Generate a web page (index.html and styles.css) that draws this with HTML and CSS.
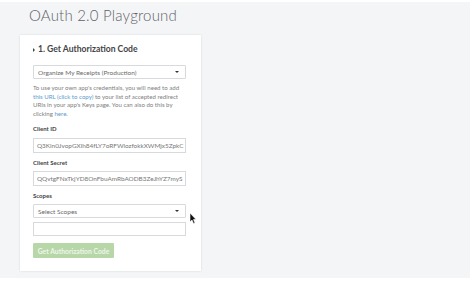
FILE: index.html
```html
<!DOCTYPE html>
<html>
<head>
<meta charset="utf-8">
<link rel="stylesheet" href="styles.css">
</head>
<body>
<div class="frame">
  <h1 class="title">OAuth 2.0 Playground</h1>
  <div class="card">
    <div class="step"><span class="caret"></span>1. Get Authorization Code</div>
    <div class="select"><span>Organize My Receipts (Production)</span><span class="arrow"></span></div>
    <p class="help">To use your own app's credentials, you will need to add<br><a>this URL (click to copy)</a> to your list of accepted redirect<br>URIs in your app's Keys page. You can also do this by<br>clicking <a>here</a>.</p>
    <div class="label first">Client ID</div>
    <div class="input">Q3Kln0JvopGXlh84fLY7oRFWlozfokkXWMjx5ZpkC</div>
    <div class="label">Client Secret</div>
    <div class="input">QQvtgFNxTkjYD8OnFbuAmRbAODB3ZeJhYZ7myS</div>
    <div class="label">Scopes</div>
    <div class="select scopes"><span>Select Scopes</span><span class="arrow"></span></div>
    <div class="input empty"></div>
    <div class="btn">Get Authorization Code</div>
    <svg class="cursor" width="8" height="11" viewBox="0 0 8 11"><path d="M1 0 L1 9 L3 7 L4.5 10.5 L6 10 L4.5 6.5 L7 6.5 Z" fill="#111" stroke="#fff" stroke-width="0.6"/></svg>
  </div>
</div>
</body>
</html>
```
FILE: styles.css
```css
html, body { margin: 0; padding: 0; background: #fff; }
body { width: 474px; height: 281px; overflow: hidden; font-family: "Lato", "Open Sans", sans-serif; }
.frame {
  width: 470px;
  height: 276px;
  margin-top: 2px;
  background: #f4f5f7;
  padding: 3px 0 0 20px;
  box-sizing: border-box;
}
.title {
  margin: 0 0 0 9px;
  font-weight: 300;
  font-size: 15px;
  line-height: 20px;
  color: #5f6368;
  letter-spacing: 0.2px;
}
.card {
  position: relative;
  margin-top: 10px;
  width: 181px;
  height: 236px;
  background: #fff;
  box-shadow: 0 0 2px rgba(0,0,0,0.12);
  box-sizing: border-box;
  padding: 9px 15px 0 13px;
}
.step {
  font-size: 8.6px;
  font-weight: 700;
  color: #444;
  height: 11px;
  line-height: 11px;
  display: flex;
  align-items: center;
}
.caret {
  width: 0; height: 0;
  border-left: 2.5px solid #444;
  border-top: 2px solid transparent;
  border-bottom: 2px solid transparent;
  margin-right: 3px;
}
.select {
  margin-top: 10px;
  height: 14px;
  border: 1px solid #d7d9dc;
  border-radius: 1px;
  box-sizing: border-box;
  display: flex;
  align-items: center;
  justify-content: space-between;
  padding: 0 6px 0 4px;
  font-size: 6.5px;
  color: #6a6a6a;
}
.arrow {
  width: 0; height: 0;
  border-top: 2.5px solid #333;
  border-left: 2px solid transparent;
  border-right: 2px solid transparent;
}
.help {
  margin: 5px 0 0 0;
  font-size: 6.1px;
  line-height: 8.5px;
  color: #808080;
  white-space: nowrap;
}
.help a { color: #5b9bd0; }
.label {
  margin-top: 6px;
  font-size: 6px;
  font-weight: 700;
  color: #444;
  line-height: 8px;
}
.label.first { margin-top: 7px; }
.input {
  margin-top: 4px;
  height: 15px;
  border: 1px solid #d7d9dc;
  box-sizing: border-box;
  font-size: 6.4px;
  color: #777;
  line-height: 13px;
  padding: 0 3px;
  overflow: hidden;
  white-space: nowrap;
}
.label.first + .input { margin-top: 5px; }
.scopes { margin-top: 4px; height: 14px; }
.input.empty { margin-top: 4px; height: 14px; }
.btn {
  margin-top: 7px;
  width: 81px;
  height: 15px;
  background: #b7d7a8;
  color: #eef6ea;
  font-size: 6.8px;
  font-weight: 700;
  display: flex;
  align-items: center;
  justify-content: center;
  border-radius: 1px;
}
.cursor { position: absolute; left: 169px; top: 178px; }
```
